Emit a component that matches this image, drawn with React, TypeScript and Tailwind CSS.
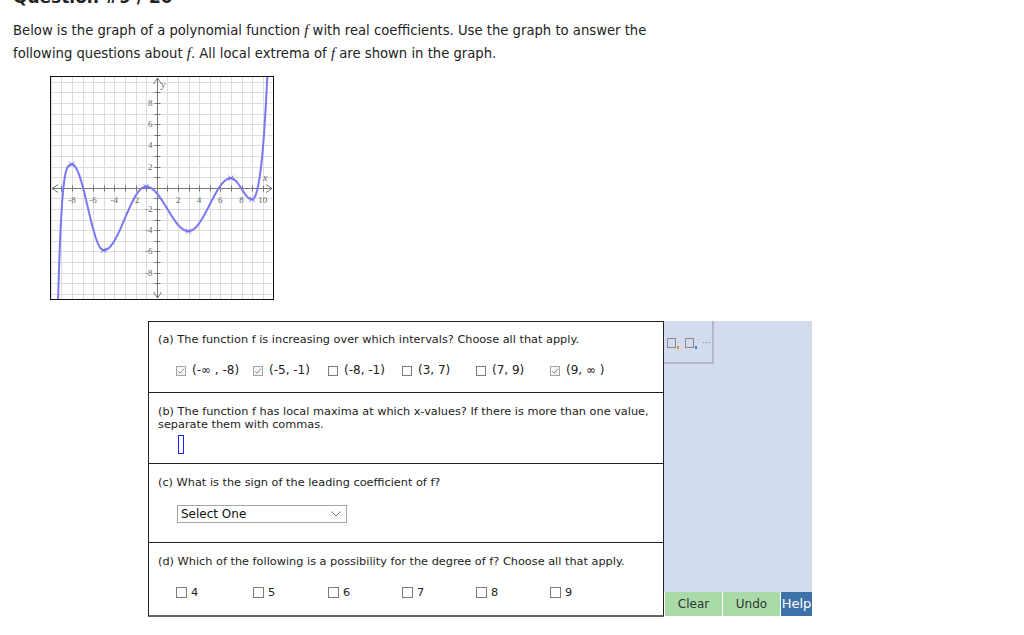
import React from "react";

const SX = (x: number) => 106.7 + 10.6 * x;
const SY = (y: number) => 111.7 - 10.6 * y;
const px = (v: number) => Math.round(v) + 0.5;

const EX = [-8, -5, -1, 3, 7, 9];
const EY = [2.2, -5.9, 0.1, -4.1, 0.9, -1.1];

function f(x: number) {
  if (x <= -8) {
    const d = -8 - x;
    return 2.2 - 0.95 * d * d - 3.88 * d ** 4;
  }
  if (x >= 9) {
    const d = x - 9;
    return -1.1 + 3.635 * d * d + 0.997 * d ** 4;
  }
  for (let i = 0; i < 5; i++) {
    if (x <= EX[i + 1]) {
      const t = (x - EX[i]) / (EX[i + 1] - EX[i]);
      return EY[i] + ((EY[i + 1] - EY[i]) * (1 - Math.cos(Math.PI * t))) / 2;
    }
  }
  return 0;
}

function curvePath() {
  const pts: string[] = [];
  for (let x = -9.6; x <= 10.7; x += 0.02) {
    const y = Math.max(-14, Math.min(14, f(x)));
    pts.push(`${SX(x).toFixed(2)},${SY(y).toFixed(2)}`);
  }
  return "M" + pts.join(" L");
}

function Graph() {
  const ox = px(SX(0));
  const oy = px(SY(0));
  const vx = Array.from({ length: 22 }, (_, i) => i - 10);
  const hy = Array.from({ length: 21 }, (_, i) => i - 10);
  const xl = [-8, -6, -4, -2, 2, 4, 6, 8, 10];
  const yl = [8, 6, 4, 2, -2, -4, -6, -8];
  return (
    <svg width="224" height="224" viewBox="0 0 224 224" className="block">
      <rect x="0" y="0" width="224" height="224" fill="#fff" />
      {vx.map((i) => (
        <line key={"v" + i} x1={px(SX(i))} x2={px(SX(i))} y1="0" y2="224" stroke="#dddddd" strokeWidth="1" />
      ))}
      {hy.map((j) => (
        <line key={"h" + j} y1={px(SY(j))} y2={px(SY(j))} x1="0" x2="224" stroke="#dddddd" strokeWidth="1" />
      ))}
      <line x1="2" x2="222" y1={oy} y2={oy} stroke="#777" strokeWidth="1" />
      <line y1="2" y2="222" x1={ox} x2={ox} stroke="#777" strokeWidth="1" />
      <path d={`M8 ${oy - 4} L2 ${oy} L8 ${oy + 4}`} fill="none" stroke="#777" />
      <path d={`M216 ${oy - 4} L222 ${oy} L216 ${oy + 4}`} fill="none" stroke="#777" />
      <path d={`M${ox - 4} 8 L${ox} 2 L${ox + 4} 8`} fill="none" stroke="#777" />
      <path d={`M${ox - 4} 216 L${ox} 222 L${ox + 4} 216`} fill="none" stroke="#777" />
      {vx.filter((i) => i !== 0 && i > -10).map((i) => (
        <line key={"tx" + i} x1={px(SX(i))} x2={px(SX(i))} y1={oy - 3} y2={oy + 3} stroke="#777" />
      ))}
      {hy.filter((j) => j !== 0 && Math.abs(j) < 10).map((j) => (
        <line key={"ty" + j} y1={px(SY(j))} y2={px(SY(j))} x1={ox - 3} x2={ox + 3} stroke="#777" />
      ))}
      {xl.map((i) => (
        <text key={"lx" + i} x={SX(i)} y={oy + 14} textAnchor="middle" fontSize="9" fontFamily="'Liberation Serif', serif" fill="#666">
          {i < 0 ? "-" + -i : i}
        </text>
      ))}
      {yl.map((j) => (
        <text key={"ly" + j} x={ox - 5} y={SY(j) + 3} textAnchor="end" fontSize="9" fontFamily="'Liberation Serif', serif" fill="#666">
          {j < 0 ? "-" + -j : j}
        </text>
      ))}
      <text x="213" y="105" fontSize="10" fontStyle="italic" fontFamily="'Liberation Serif', serif" fill="#666">x</text>
      <text x="111" y="12" fontSize="10" fontStyle="italic" fontFamily="'Liberation Serif', serif" fill="#666">y</text>
      <path d={curvePath()} fill="none" stroke="#7878f4" strokeWidth="2" strokeLinejoin="round" />
      {EX.map((x, i) => (
        <path
          key={"m" + i}
          d={`M${SX(x) - 2.5} ${SY(EY[i]) - 2.5} L${SX(x) + 2.5} ${SY(EY[i]) + 2.5} M${SX(x) - 2.5} ${SY(EY[i]) + 2.5} L${SX(x) + 2.5} ${SY(EY[i]) - 2.5}`}
          stroke="#6b6bea"
          strokeWidth="1"
        />
      ))}
      <rect x="0.5" y="0.5" width="223" height="223" fill="none" stroke="#111" strokeWidth="1" />
    </svg>
  );
}

function Box({ checked, size }: { checked?: boolean; size: number }) {
  return (
    <span
      className={
        "inline-flex shrink-0 items-center justify-center border " +
        (checked ? "border-[#a2a2a2] bg-[#f7f7f7]" : "border-[#7c7c7c] bg-white")
      }
      style={{ width: size, height: size }}
    >
      {checked && (
        <svg width="8" height="8" viewBox="0 0 8 8">
          <path d="M1.2 4.2 L3.2 6.2 L6.8 1.6" fill="none" stroke="#8c8c8c" strokeWidth="1" />
        </svg>
      )}
    </span>
  );
}

const colW = ["w-[77px]", "w-[75px]", "w-[74px]", "w-[74px]", "w-[74px]", "w-[60px]"];

const intervals = [
  { t: "(-∞ , -8)", c: true },
  { t: "(-5, -1)", c: true },
  { t: "(-8, -1)", c: false },
  { t: "(3, 7)", c: false },
  { t: "(7, 9)", c: false },
  { t: "(9, ∞ )", c: true },
];

const I = ({ children }: { children: React.ReactNode }) => (
  <span className="font-['Liberation_Serif',serif] text-[15px] italic">{children}</span>
);

export default function App() {
  return (
    <div className="min-h-screen overflow-hidden bg-white font-['DejaVu_Sans',Verdana,sans-serif] text-[#222]">
      <div className="pl-[13px]">
        <h1 className="-mt-[13px] whitespace-nowrap text-[17px] font-bold leading-[20px]">Question #9 / 20</h1>
        <p className="mt-[12px] whitespace-nowrap text-[13.2px] leading-[22px]">
          Below is the graph of a polynomial function <I>f</I> with real coefficients. Use the graph to answer the
          <br />
          following questions about <I>f</I>. All local extrema of <I>f</I> are shown in the graph.
        </p>
      </div>

      <div className="ml-[50px] mt-[11px]">
        <Graph />
      </div>

      <div className="ml-[148px] mt-[21px] flex items-start">
        <div className="w-[516px] border border-b-2 border-[#222] border-b-[#666] text-[11.3px] leading-[13px]">
          <div className="h-[71px] border-b border-[#222] pl-[9px] pt-[11px]">
            <div>(a) The function f is increasing over which intervals? Choose all that apply.</div>
            <div className="ml-[18px] mt-[18px] flex items-center">
              {intervals.map((it, i) => (
                <div key={i} className={"flex items-center " + colW[i]}>
                  <Box checked={it.c} size={10} />
                  <span className="ml-[6px] whitespace-nowrap text-[12px]">{it.t}</span>
                </div>
              ))}
            </div>
          </div>

          <div className="h-[71px] border-b border-[#222] pl-[9px] pt-[12px]">
            <div>
              (b) The function f has local maxima at which x-values? If there is more than one value,
              <br />
              separate them with commas.
            </div>
            <div className="ml-[20px] mt-[4px] h-[19px] w-[6px] border border-[#2323e8]" />
          </div>

          <div className="h-[79px] border-b border-[#222] pl-[9px] pt-[12px]">
            <div>(c) What is the sign of the leading coefficient of f?</div>
            <div className="ml-[19px] mt-[16px] flex h-[18px] w-[170px] items-center justify-between border border-[#a5a5a5] bg-white pl-[3px] pr-[5px]">
              <span className="text-[12px] leading-[14px] text-[#111]">Select One</span>
              <svg width="10" height="6" viewBox="0 0 10 6">
                <path d="M0.5 0.5 L5 5 L9.5 0.5" fill="none" stroke="#777" strokeWidth="1" />
              </svg>
            </div>
          </div>

          <div className="h-[72px] pl-[9px] pt-[12px]">
            <div>(d) Which of the following is a possibility for the degree of f? Choose all that apply.</div>
            <div className="ml-[18px] mt-[18px] flex items-center">
              {["4", "5", "6", "7", "8", "9"].map((n, i) => (
                <div key={n} className={"flex items-center " + colW[i]}>
                  <Box size={11} />
                  <span className="ml-[4px]">{n}</span>
                </div>
              ))}
            </div>
          </div>
        </div>

        <div className="flex h-[295px] w-[148px] flex-col justify-between bg-[#d3dcee]">
          <div className="flex h-[43px] w-[50px] items-center gap-[1px] border-b-2 border-r-2 border-[#b2b8c6] pl-[3px] pt-[2px]">
            <span className="h-[10px] w-[9px] border border-[#8a8a8a]" />
            <span className="mt-[9px] h-[3px] w-[2px] bg-[#e08a2a]" />
            <span className="ml-[5px] h-[10px] w-[9px] border border-[#8a8a8a]" />
            <span className="mt-[9px] h-[3px] w-[2px] bg-[#3a7fd0]" />
            <span className="ml-[4px] text-[9px] leading-[10px] text-[#777]">···</span>
          </div>
          <div className="flex h-[24px] gap-[1px] bg-white pl-[1px]">
            <button className="flex w-[57px] items-center justify-center bg-[#a9dba9] text-[12px] text-[#333]">Clear</button>
            <button className="flex w-[57px] items-center justify-center bg-[#a9dba9] text-[12px] text-[#333]">Undo</button>
            <button className="flex w-[31px] items-center justify-center bg-[#3d72a8] text-[13px] text-white">Help</button>
          </div>
        </div>
      </div>
    </div>
  );
}
